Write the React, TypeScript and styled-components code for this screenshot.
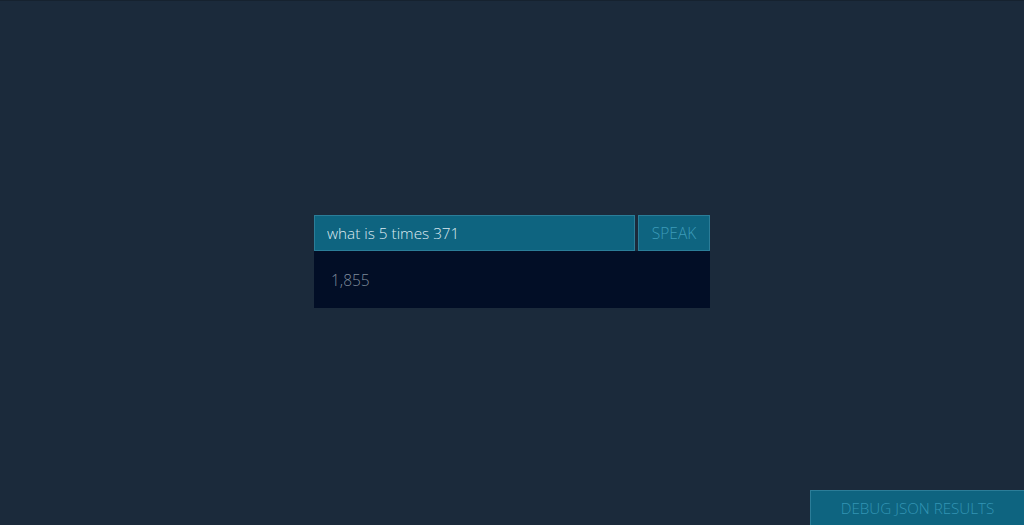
import React from 'react'
import styled, { createGlobalStyle } from 'styled-components'

const GlobalStyle = createGlobalStyle`
	html, body {
		margin: 0;
		padding: 0;
		height: 100%;
		background: #1b2a3b;
	}
	#root {
		height: 100%;
	}
	* {
		box-sizing: border-box;
	}
`

export default function App() {
	return (
		<>
			<GlobalStyle />
			<Page>
				<Panel>
					<QueryRow>
						<QueryInput defaultValue="what is 5 times 371" />
						<SpeakButton>SPEAK</SpeakButton>
					</QueryRow>
					<Result>1,855</Result>
				</Panel>
				<DebugButton>DEBUG JSON RESULTS</DebugButton>
			</Page>
		</>
	)
}

const Page = styled.div`
	height: 100vh;
	display: flex;
	align-items: center;
	justify-content: center;
	border-top: 1px solid #16222f;
	font-family: 'Open Sans', 'Liberation Sans', sans-serif;
	font-weight: 300;
`

const Panel = styled.div`
	width: 396px;
	display: flex;
	flex-direction: column;
	margin-bottom: 3px;
`

const QueryRow = styled.div`
	display: flex;
	gap: 3px;
	height: 36px;
`

const QueryInput = styled.input`
	flex: 1;
	min-width: 0;
	height: 36px;
	margin: 0;
	padding: 0 12px;
	background: #0e6480;
	border: 1px solid #2b7d98;
	color: #dce9f0;
	font-family: inherit;
	font-weight: 300;
	font-size: 15.3px;
	outline: none;
`

const SpeakButton = styled.button`
	width: 72px;
	height: 36px;
	margin: 0;
	padding: 0;
	background: #0e6480;
	border: 1px solid #2b7d98;
	color: #3c9bb9;
	font-family: inherit;
	font-weight: 300;
	font-size: 15.5px;
	cursor: pointer;
`

const Result = styled.div`
	height: 57px;
	display: flex;
	align-items: center;
	padding: 0 17px;
	background: #020e26;
	color: #7f8b9b;
	font-size: 15.5px;
`

const DebugButton = styled.button`
	position: fixed;
	right: 0;
	bottom: 0;
	width: 214px;
	height: 35px;
	margin: 0;
	padding: 0;
	background: #0e6480;
	border: none;
	border-top: 1px solid #2b7d98;
	border-left: 1px solid #2b7d98;
	color: #3294b4;
	font-family: inherit;
	font-weight: 300;
	font-size: 15.2px;
	cursor: pointer;
`
